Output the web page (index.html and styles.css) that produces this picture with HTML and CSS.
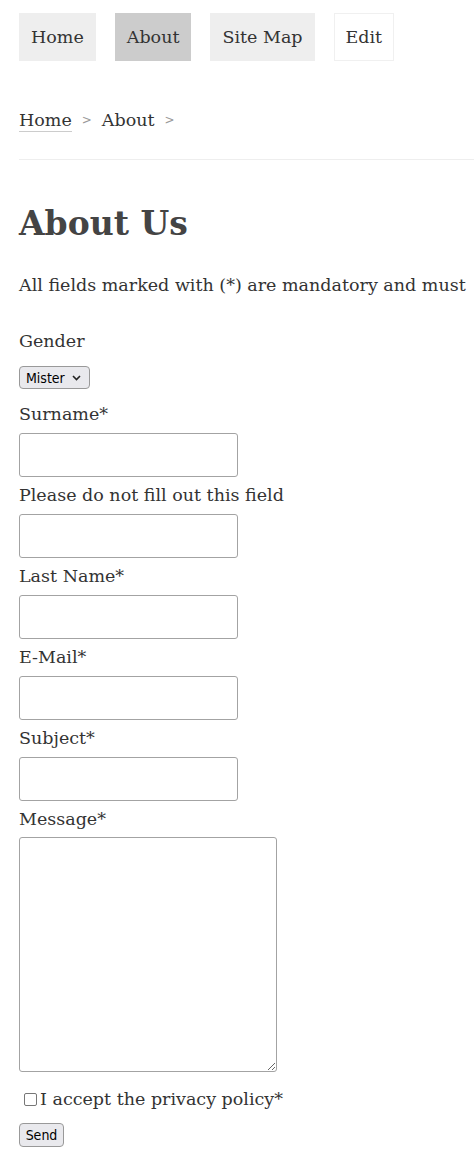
FILE: index.html
```html
<!DOCTYPE html>
<html lang="en">
<head>
<meta charset="utf-8">
<title>About Us</title>
<link rel="stylesheet" href="styles.css">
</head>
<body>
<div class="page">
  <nav class="mainnav">
    <a class="navitem" href="#">Home</a>
    <a class="navitem active" href="#">About</a>
    <a class="navitem" href="#">Site Map</a>
    <a class="navitem edit" href="#">Edit</a>
  </nav>
  <div class="crumbs">
    <a class="crumb-link" href="#">Home</a>
    <span class="sep">&gt;</span>
    <span class="crumb">About</span>
    <span class="sep">&gt;</span>
  </div>
  <div class="rule"></div>
  <h1 class="title">About Us</h1>
  <p class="intro">All fields marked with (*) are mandatory and must</p>
  <form class="form">
    <label class="lbl gender-lbl" for="gender">Gender</label>
    <span class="selwrap">
      <select id="gender" class="sel"><option>Mister</option><option>Miss</option></select>
      <svg class="chev" width="9" height="6" viewBox="0 0 9 6"><path d="M1 1 L4.5 4.5 L8 1" fill="none" stroke="#222" stroke-width="1.6"/></svg>
    </span>
    <label class="lbl" for="f1">Surname*</label>
    <input id="f1" class="field" type="text">
    <label class="lbl" for="f2">Please do not fill out this field</label>
    <input id="f2" class="field" type="text">
    <label class="lbl" for="f3">Last Name*</label>
    <input id="f3" class="field" type="text">
    <label class="lbl" for="f4">E-Mail*</label>
    <input id="f4" class="field" type="text">
    <label class="lbl" for="f5">Subject*</label>
    <input id="f5" class="field" type="text">
    <label class="lbl msg-lbl" for="f6">Message*</label>
    <textarea id="f6" class="area"></textarea>
    <label class="check"><input type="checkbox" class="cb"><span>I accept the privacy policy*</span></label>
    <button type="button" class="send">Send</button>
  </form>
</div>
</body>
</html>
```
FILE: styles.css
```css
html, body {
  margin: 0;
  padding: 0;
  background: #fff;
  overflow: hidden;
}
body {
  font-family: "DejaVu Serif", serif;
  color: #333;
  font-size: 17.5px;
}
.page {
  padding: 13px 0 0 19px;
}
.mainnav {
  display: flex;
  gap: 19px;
}
.navitem {
  display: block;
  height: 48px;
  line-height: 48px;
  padding: 0 12px;
  background: #eee;
  color: #333;
  text-decoration: none;
  font-size: 17.5px;
  box-sizing: border-box;
}
.navitem.active {
  background: #ccc;
}
.navitem.edit {
  background: #fff;
  border: 1px solid #f0f0f0;
  line-height: 46px;
  padding: 0 11px;
}
.crumbs {
  margin-top: 44px;
  height: 30px;
  line-height: 30px;
  display: flex;
  align-items: center;
  white-space: nowrap;
}
.crumb-link {
  color: #333;
  text-decoration: none;
  border-bottom: 1px solid #ccc;
  line-height: 22px;
}
.crumb {
  color: #333;
}
.sep {
  font-family: "DejaVu Sans", sans-serif;
  font-size: 12px;
  color: #999;
  margin: 0 10px;
}
.rule {
  margin-top: 24px;
  height: 1px;
  background: #eee;
}
.title {
  margin: 40px 0 0;
  font-size: 33px;
  line-height: 48px;
  font-weight: bold;
  color: #444;
}
.intro {
  margin: 22px 0 0;
  line-height: 30px;
  white-space: nowrap;
}
.form {
  display: flex;
  flex-direction: column;
  align-items: flex-start;
  margin-top: 26px;
}
.lbl {
  display: block;
  line-height: 37px;
}
.gender-lbl {
  line-height: 30px;
  margin-bottom: 10px;
}
.selwrap {
  position: relative;
  display: inline-block;
  margin-bottom: 7px;
}
.sel {
  -webkit-appearance: none;
  appearance: none;
  height: 23px;
  width: 71px;
  padding: 0 0 0 6px;
  background: #e9e9ed;
  border: 1px solid #999;
  border-radius: 4px;
  font-family: "DejaVu Sans Condensed", "DejaVu Sans", sans-serif;
  font-size: 14px;
  color: #000;
  display: block;
}
.chev {
  position: absolute;
  right: 9px;
  top: 9px;
  pointer-events: none;
}
.field {
  display: block;
  width: 219px;
  height: 44px;
  box-sizing: border-box;
  margin: 0;
  border: 1px solid #a3a3a3;
  border-radius: 3px;
  background: #fff;
}
.msg-lbl {
  line-height: 36px;
}
.area {
  display: block;
  width: 258px;
  height: 235px;
  box-sizing: border-box;
  margin: 0;
  border: 1px solid #a3a3a3;
  border-radius: 3px;
  resize: both;
}
.check {
  display: flex;
  align-items: center;
  margin-top: 15px;
  line-height: 24px;
}
.cb {
  -webkit-appearance: none;
  appearance: none;
  width: 13px;
  height: 13px;
  box-sizing: border-box;
  margin: 0 3px 0 5px;
  border: 1.5px solid #777;
  border-radius: 2px;
  background: #fff;
}
.send {
  margin-top: 12px;
  height: 24px;
  width: 45px;
  padding: 0;
  background: #e9e9ed;
  border: 1px solid #999;
  border-radius: 4px;
  font-family: "DejaVu Sans Condensed", "DejaVu Sans", sans-serif;
  font-size: 14px;
  color: #000;
}
```
